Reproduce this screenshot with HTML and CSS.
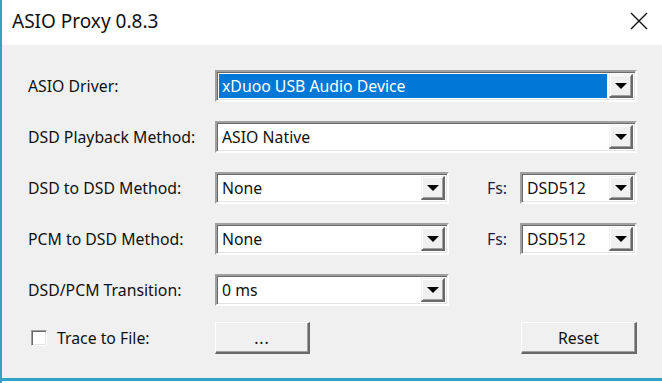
FILE: index.html
```html
<!DOCTYPE html>
<html lang="en">
<head>
    <meta charset="UTF-8">
    <title>ASIO Proxy 0.8.3</title>
    <link rel="stylesheet" href="styles.css">
</head>
<body>
    <div class="window">
        <div class="titlebar">
            <span class="title">ASIO Proxy 0.8.3</span>
            <svg class="close" width="18" height="18" viewBox="0 0 18 18">
                <path d="M1 1 L17 17 M17 1 L1 17" stroke="#111" stroke-width="1.4" fill="none"/>
            </svg>
        </div>

        <div class="client">
            <!-- driver -->
            <div class="row">
                <div class="label">ASIO Driver:</div>
                <div class="combo wide">
                    <div class="field selected">xDuoo USB Audio Device</div>
                    <div class="drop"><span class="arrow"></span></div>
                </div>
            </div>

            <div class="row">
                <div class="label">DSD Playback Method:</div>
                <div class="combo wide">
                    <div class="field">ASIO Native</div>
                    <div class="drop"><span class="arrow"></span></div>
                </div>
            </div>

            <div class="row">
                <div class="label">DSD to DSD Method:</div>
                <div class="combo mid">
                    <div class="field">None</div>
                    <div class="drop"><span class="arrow"></span></div>
                </div>
                <div class="fs">Fs:</div>
                <div class="combo small">
                    <div class="field">DSD512</div>
                    <div class="drop"><span class="arrow"></span></div>
                </div>
            </div>

            <div class="row">
                <div class="label">PCM to DSD Method:</div>
                <div class="combo mid">
                    <div class="field">None</div>
                    <div class="drop"><span class="arrow"></span></div>
                </div>
                <div class="fs">Fs:</div>
                <div class="combo small">
                    <div class="field">DSD512</div>
                    <div class="drop"><span class="arrow"></span></div>
                </div>
            </div>

            <div class="row">
                <div class="label">DSD/PCM Transition:</div>
                <div class="combo mid">
                    <div class="field">0 ms</div>
                    <div class="drop"><span class="arrow"></span></div>
                </div>
            </div>

            <div class="row last">
                <div class="label check-label">
                    <span class="checkbox"></span>
                    <span>Trace to File:</span>
                </div>
                <button class="btn browse">...</button>
                <button class="btn reset">Reset</button>
            </div>
        </div>
    </div>
</body>
</html>
```

FILE: styles.css
```css
body {
    margin: 0;
    background: #fff;
    font-family: "Noto Sans", "Open Sans", sans-serif;
    font-size: 15.8px;
    color: #111;
}
.window {
    width: 662px;
    height: 383px;
    box-sizing: border-box;
    border-left: 2px solid #2fa4c6;
    background: #fff;
}
.titlebar {
    height: 45px;
    display: flex;
    align-items: center;
    justify-content: space-between;
    padding: 0 14px 0 10px;
    background: #fff;
}
.title {
    font-size: 19px;
    margin-top: -3px;
}
.close {
    margin-top: -4px;
}
.client {
    height: 336px;
    box-sizing: border-box;
    background: #f0f0f0;
    border-bottom: 3px solid #2fa4c6;
    padding: 25px 0 0 26px;
}
.row {
    display: flex;
    align-items: center;
    height: 32px;
    margin-bottom: 19px;
}
.row.last {
    margin-top: -3px;
}
.label {
    width: 187px;
    white-space: nowrap;
}
.combo {
    display: flex;
    height: 32px;
    box-sizing: border-box;
    background: #fff;
    border: 2px solid;
    border-color: #a0a0a0 #fff #fff #a0a0a0;
    box-shadow: inset 1px 1px 0 #696969, inset -1px -1px 0 #e3e3e3;
    padding: 2px 2px 2px 2px;
}
.combo.wide {
    width: 422px;
}
.combo.mid {
    width: 234px;
}
.combo.small {
    width: 117px;
}
.field {
    flex: 1;
    display: flex;
    align-items: center;
    padding-left: 3px;
    margin-right: 2px;
    white-space: nowrap;
}
.field.selected {
    background: #0078d7;
    color: #fff;
}
.drop {
    width: 24px;
    box-sizing: border-box;
    background: #f0f0f0;
    border-top: 1px solid #f0f0f0;
    border-left: 1px solid #f0f0f0;
    border-right: 2px solid #696969;
    border-bottom: 2px solid #696969;
    box-shadow: inset 1px 1px 0 #fff, inset -1px -1px 0 #a0a0a0;
    display: flex;
    align-items: center;
    justify-content: center;
}
.arrow {
    width: 0;
    height: 0;
    border-left: 6px solid transparent;
    border-right: 6px solid transparent;
    border-top: 6px solid #000;
    margin-top: 1px;
}
.fs {
    width: 33px;
    margin-left: 38px;
    color: #1c1c4a;
}
.check-label {
    display: flex;
    align-items: center;
    gap: 10px;
    padding-left: 3px;
    box-sizing: border-box;
}
.checkbox {
    width: 16px;
    height: 16px;
    box-sizing: border-box;
    background: #fff;
    border: 1px solid;
    border-color: #a0a0a0 #fff #fff #a0a0a0;
    box-shadow: inset 1px 1px 0 #696969, inset -1px -1px 0 #e3e3e3;
}
.btn {
    height: 32px;
    box-sizing: border-box;
    font-family: inherit;
    font-size: 15.8px;
    color: #111;
    background: #f0f0f0;
    border: 1px solid;
    border-color: #fff #696969 #696969 #fff;
    border-right-width: 2px;
    border-bottom-width: 2px;
    box-shadow: inset -1px -1px 0 #a0a0a0;
    padding: 0;
}
.browse {
    width: 95px;
    letter-spacing: 1px;
}
.reset {
    width: 116px;
    margin-left: 211px;
}
```
